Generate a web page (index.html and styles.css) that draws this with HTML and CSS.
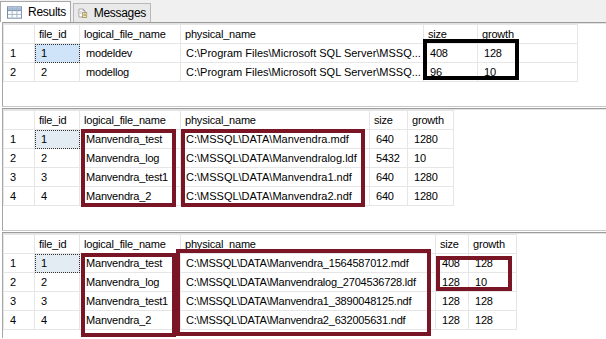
FILE: index.html
```html
<!DOCTYPE html>
<html lang="en">
<head>
  <meta charset="UTF-8">
  <title>Results</title>
  <link rel="stylesheet" href="styles.css">
</head>
<body>
  <!-- Tab strip -->
  <div class="tabs">
    <div class="tab active">
      <svg width="16" height="13" viewBox="0 0 16 13">
        <rect x="0.5" y="0.5" width="15" height="12" fill="#fff" stroke="#6d87a8"/>
        <rect x="1" y="1" width="14" height="3" fill="#a9bdd6"/>
        <line x1="1" y1="4.5" x2="15" y2="4.5" stroke="#6d87a8"/>
        <line x1="1" y1="8.5" x2="15" y2="8.5" stroke="#9fb0c6"/>
        <line x1="5.5" y1="1" x2="5.5" y2="12" stroke="#9fb0c6"/>
        <line x1="10.5" y1="1" x2="10.5" y2="12" stroke="#9fb0c6"/>
      </svg>
      <span>Results</span>
    </div>
    <div class="tab">
      <svg width="16" height="16" viewBox="0 0 16 16">
        <path d="M1.5 1.5h7l3 3v10h-10z" fill="#fff" stroke="#7b7b7b"/>
        <path d="M8.5 1.5v3h3" fill="none" stroke="#7b7b7b"/>
        <rect x="7.5" y="7.5" width="7" height="8" fill="#f3e9b8" stroke="#8a7a3c"/>
        <line x1="9" y1="10" x2="13" y2="10" stroke="#8a7a3c"/>
        <line x1="9" y1="12" x2="13" y2="12" stroke="#8a7a3c"/>
        <line x1="3" y1="6" x2="7" y2="6" stroke="#a0a0a0"/>
        <line x1="3" y1="8.5" x2="6" y2="8.5" stroke="#a0a0a0"/>
      </svg>
      <span>Messages</span>
    </div>
  </div>

  <!-- Grid 1 -->
  <div class="pane pane-1">
    <table class="grid grid-1">
      <colgroup>
        <col style="width:31px"><col style="width:45px"><col style="width:101px">
        <col style="width:243px"><col style="width:54px"><col style="width:100px">
      </colgroup>
      <tr class="head"><th></th><th>file_id</th><th>logical_file_name</th><th>physical_name</th><th>size</th><th>growth</th></tr>
      <tr><td class="num">1</td><td class="sel">1</td><td>modeldev</td><td class="path">C:\Program Files\Microsoft SQL Server\MSSQ...</td><td>408</td><td>128</td></tr>
      <tr><td class="num">2</td><td>2</td><td>modellog</td><td class="path">C:\Program Files\Microsoft SQL Server\MSSQ...</td><td>96</td><td>10</td></tr>
    </table>
    <div class="mark black" style="left:420px;top:16px;width:96px;height:41px"></div>
  </div>

  <!-- Grid 2 -->
  <div class="pane pane-2">
    <table class="grid grid-2">
      <colgroup>
        <col style="width:31px"><col style="width:45px"><col style="width:101px">
        <col style="width:189px"><col style="width:38px"><col style="width:46px">
      </colgroup>
      <tr class="head"><th></th><th>file_id</th><th>logical_file_name</th><th>physical_name</th><th>size</th><th>growth</th></tr>
      <tr><td class="num">1</td><td class="sel">1</td><td>Manvendra_test</td><td class="path">C:\MSSQL\DATA\Manvendra.mdf</td><td>640</td><td>1280</td></tr>
      <tr><td class="num">2</td><td>2</td><td>Manvendra_log</td><td class="path">C:\MSSQL\DATA\Manvendralog.ldf</td><td>5432</td><td>10</td></tr>
      <tr><td class="num">3</td><td>3</td><td>Manvendra_test1</td><td class="path">C:\MSSQL\DATA\Manvendra1.ndf</td><td>640</td><td>1280</td></tr>
      <tr><td class="num">4</td><td>4</td><td>Manvendra_2</td><td class="path">C:\MSSQL\DATA\Manvendra2.ndf</td><td>640</td><td>1280</td></tr>
    </table>
    <div class="mark" style="left:78px;top:20px;width:95px;height:78px"></div>
    <div class="mark" style="left:178px;top:20px;width:184px;height:78px"></div>
  </div>

  <!-- Grid 3 -->
  <div class="pane pane-3">
    <table class="grid grid-3">
      <colgroup>
        <col style="width:31px"><col style="width:45px"><col style="width:101px">
        <col style="width:255px"><col style="width:33px"><col style="width:48px">
      </colgroup>
      <tr class="head"><th></th><th>file_id</th><th>logical_file_name</th><th>physical_name</th><th>size</th><th>growth</th></tr>
      <tr><td class="num">1</td><td class="sel">1</td><td>Manvendra_test</td><td class="path">C:\MSSQL\DATA\Manvendra_1564587012.mdf</td><td>408</td><td>128</td></tr>
      <tr><td class="num">2</td><td>2</td><td>Manvendra_log</td><td class="path">C:\MSSQL\DATA\Manvendralog_2704536728.ldf</td><td>128</td><td>10</td></tr>
      <tr><td class="num">3</td><td>3</td><td>Manvendra_test1</td><td class="path">C:\MSSQL\DATA\Manvendra1_3890048125.ndf</td><td>128</td><td>128</td></tr>
      <tr><td class="num">4</td><td>4</td><td>Manvendra_2</td><td class="path">C:\MSSQL\DATA\Manvendra2_632005631.ndf</td><td>128</td><td>128</td></tr>
    </table>
    <div class="mark" style="left:78px;top:20px;width:95px;height:84px"></div>
    <div class="mark" style="left:173px;top:16px;width:255px;height:87px"></div>
    <div class="mark" style="left:433px;top:23px;width:76px;height:35px"></div>
  </div>
</body>
</html>
```

FILE: styles.css
```css
* {
  margin: 0;
  padding: 0;
  box-sizing: border-box;
}

body {
  font-family: "Liberation Sans", Arial, sans-serif;
  font-size: 11px;
  color: #000;
  background-color: #fff;
  width: 606px;
  height: 339px;
  overflow: hidden;
}

/* Tab strip */
.tabs {
  display: flex;
  align-items: flex-end;
  height: 22px;
  background-color: #f0f0f0;
}

.tab {
  display: flex;
  align-items: center;
  gap: 6px;
  height: 19px;
  padding: 0 4px;
  margin-right: 2px;
  border: 1px solid #b9b9b9;
  border-bottom: none;
  background-color: #e9e9e9;
  font-size: 12px;
  letter-spacing: -0.3px;
}

.tab.active {
  width: 71px;
  height: 21px;
  padding-left: 6px;
  background-color: #fff;
  border-color: #a8a8a8;
}

.tab:last-child {
  width: 78px;
}

/* Result panes */
.pane {
  position: relative;
  border-top: 1px solid #9c9c9c;
  border-left: 1px solid #a6a6a6;
  margin-left: 2px;
  box-shadow: inset 0 1px 0 #e2e2e2;
  padding-top: 1px;
}

.pane-1 {
  height: 85px;
  border-bottom: 1px solid #c8c8c8;
  margin-bottom: 1px;
}

.pane-2 {
  height: 123px;
  border-bottom: 1px solid #c8c8c8;
  margin-bottom: 1px;
}

.pane-3 {
  height: 106px;
}

.grid {
  border-collapse: collapse;
  table-layout: fixed;
  letter-spacing: -0.2px;
}

.grid-1 {
  width: 574px;
}

.grid-2 {
  width: 450px;
}

.grid-3 {
  width: 513px;
}

.grid th,
.grid td {
  height: 19px;
  padding: 0 3px 0 4px;
  border: 1px solid #e6e6e6;
  font-weight: normal;
  text-align: left;
  white-space: nowrap;
  overflow: hidden;
  line-height: 17px;
}

.grid td {
  padding-left: 6px;
}

.grid td.path {
  padding-left: 5px;
  letter-spacing: 0;
}

.grid-3 td.path {
  letter-spacing: -0.2px;
}

.grid td.sel {
  outline: 1px dotted #333;
  outline-offset: -1px;
  background-color: #e3ebf3;
}

.grid-1 td.sel {
  background-color: #cfe4f8;
}

/* Highlight boxes drawn over the grid */
.mark {
  position: absolute;
  border: 4px solid #7a1526;
}

.mark.black {
  border-color: #000;
}
```
